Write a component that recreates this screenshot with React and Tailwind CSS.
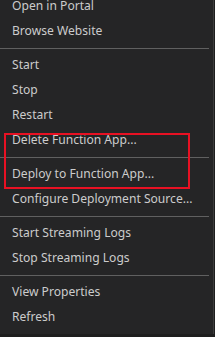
const groups = [
  ['Open in Portal', 'Browse Website'],
  ['Start', 'Stop', 'Restart', 'Delete Function App...'],
  ['Deploy to Function App...', 'Configure Deployment Source...'],
  ['Start Streaming Logs', 'Stop Streaming Logs'],
  ['View Properties', 'Refresh'],
]

function MenuItem({ label }) {
  return (
    <div className="h-[25px] flex items-center pl-3 text-[12.1px] text-[#cccccc] whitespace-nowrap">
      {label}
    </div>
  )
}

export default function App() {
  return (
    <div
      className="relative w-[215px] h-[337px] overflow-hidden bg-[#1e1e1e]"
      style={{ fontFamily: '"Noto Sans", "Open Sans", sans-serif' }}
    >
      <div className="h-[334px] w-[214px] bg-[#252526] border-r border-[#3c3c3c] overflow-hidden">
        <div className="-mt-[6px]">
          {groups.map((items, i) => (
            <div key={i}>
              {i > 0 && (
                <div className="py-1">
                  <div className="h-px w-[209px] bg-[#606060]" />
                </div>
              )}
              {items.map((label) => (
                <MenuItem key={label} label={label} />
              ))}
            </div>
          ))}
        </div>
      </div>
      {/* highlight box drawn over the two function app entries */}
      <div className="absolute left-[4px] top-[133px] w-[186px] h-[56px] border-2 border-[#e81123]" />
    </div>
  )
}
